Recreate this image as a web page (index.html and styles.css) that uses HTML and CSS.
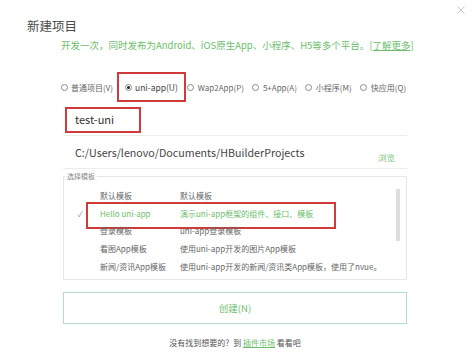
FILE: index.html
```html
<!DOCTYPE html>
<html lang="zh">
<head>
<meta charset="utf-8">
<title>新建项目</title>
<link rel="stylesheet" href="styles.css">
</head>
<body>
<div class="dialog">
  <span class="close">
    <svg width="8" height="8" viewBox="0 0 8 8"><path d="M0.5 0.5L7.5 7.5M7.5 0.5L0.5 7.5" stroke="#c8c8c8" stroke-width="1"/></svg>
  </span>
  <h1 class="title">新建项目</h1>
  <p class="subtitle">开发一次，同时发布为Android、iOS原生App、小程序、H5等多个平台。<a class="more">[了解更多]</a></p>

  <div class="content">
    <div class="types">
      <label class="type"><span class="radio"></span>普通项目(V)</label>
      <label class="type selected"><span class="radio checked"></span>uni-app(U)</label>
      <label class="type"><span class="radio"></span>Wap2App(P)</label>
      <label class="type"><span class="radio"></span>5+App(A)</label>
      <label class="type"><span class="radio"></span>小程序(M)</label>
      <label class="type"><span class="radio"></span>快应用(Q)</label>
    </div>

    <div class="name-row">
      <div class="name-box">test-uni</div>
    </div>

    <div class="path-row">
      <span class="path">C:/Users/lenovo/Documents/HBuilderProjects</span>
      <a class="browse">浏览</a>
    </div>

    <fieldset class="templates">
      <legend>选择模板</legend>
      <div class="tpl-body">
        <div class="tpl-list">
          <div class="tpl"><span class="chk"></span><span class="c1">默认模板</span><span>默认模板</span></div>
          <div class="tpl active"><span class="chk">✓</span><span class="c1">Hello uni-app</span><span>演示uni-app框架的组件、接口、模板</span></div>
          <div class="tpl"><span class="chk"></span><span class="c1">登录模板</span><span>uni-app登录模板</span></div>
          <div class="tpl"><span class="chk"></span><span class="c1">看图App模板</span><span>使用uni-app开发的图片App模板</span></div>
          <div class="tpl"><span class="chk"></span><span class="c1">新闻/资讯App模板</span><span>使用uni-app开发的新闻/资讯类App模板，使用了nvue。</span></div>
        </div>
        <div class="scroll"><div class="thumb"></div></div>
      </div>
    </fieldset>

    <button class="create">创建(N)</button>

    <p class="footer">没有找到想要的？到 <a class="market">插件市场</a> 看看吧</p>
  </div>
</div>
</body>
</html>
```

FILE: styles.css
```css
* { box-sizing: border-box; }
html, body {
  margin: 0;
  padding: 0;
  background: #fff;
}
body {
  font-family: "Noto Sans CJK SC", "Noto Sans", sans-serif;
  color: #555;
}
.dialog {
  position: relative;
  width: 474px;
  height: 363px;
  padding-top: 18px;
}
.close {
  position: absolute;
  top: 6px;
  left: 457px;
  width: 8px;
  height: 8px;
  display: block;
}
.close svg { display: block; }
.title {
  margin: 0 0 0 27px;
  font-size: 12.5px;
  line-height: 16px;
  font-weight: normal;
  color: #4a4a4a;
}
.subtitle {
  margin: 4px 0 0 61px;
  font-size: 9.5px;
  line-height: 14px;
  color: #6cbd6c;
  white-space: nowrap;
}
.more {
  text-decoration: underline;
  color: #6cbd6c;
}
.content {
  margin: 20px 0 0 63px;
  width: 344px;
}
.types {
  display: flex;
  align-items: center;
  height: 30px;
  font-size: 8px;
  color: #666;
  white-space: nowrap;
}
.type {
  display: flex;
  align-items: center;
  gap: 4px;
  margin-right: 8px;
}
.type:first-child { margin-left: -2px; margin-right: 4px; gap: 3px; }
.type.selected {
  height: 30px;
  border: 2px solid #cf3a3a;
  padding: 0 6px 0 6px;
  margin-right: 1px;
  gap: 3px;
  font-size: 8.5px;
  color: #444;
}
.radio {
  width: 7px;
  height: 7px;
  border: 1px solid #8a8a8a;
  border-radius: 50%;
  display: inline-flex;
  align-items: center;
  justify-content: center;
  flex: none;
}
.radio.checked::after {
  content: "";
  width: 3px;
  height: 3px;
  background: #222;
  border-radius: 50%;
}
.name-row {
  height: 34px;
  padding: 5px 0 0 2px;
  border-bottom: 1px solid #ececec;
}
.name-box {
  width: 76px;
  height: 26px;
  border: 2px solid #cf3a3a;
  padding-left: 8px;
  font-size: 11px;
  line-height: 21px;
  color: #333;
}
.path-row {
  height: 33px;
  display: flex;
  align-items: flex-start;
  justify-content: space-between;
  padding: 9px 12px 0 12px;
  border-bottom: 1px solid #ececec;
}
.path {
  font-size: 10.7px;
  line-height: 16px;
  color: #444;
}
.browse {
  margin-top: 6px;
  font-size: 8.5px;
  line-height: 12px;
  color: #7cc47c;
}
.templates {
  margin: 2px 0 0 0;
  padding: 0 0 4px 0;
  border: 1px solid #e6e6e6;
  min-width: 0;
}
.templates legend {
  margin-left: 1px;
  padding: 0 2px;
  font-size: 7px;
  line-height: 10px;
  color: #888;
}
.tpl-body {
  display: flex;
  padding-top: 6px;
}
.tpl-list {
  flex: 1;
}
.tpl {
  position: relative;
  display: grid;
  grid-template-columns: 36px 80px 1fr;
  height: 17.6px;
  align-items: center;
  font-size: 8px;
  color: #666;
  white-space: nowrap;
}
.chk {
  text-align: right;
  padding-right: 17px;
  color: #999;
  font-size: 8px;
}
.tpl.active { color: #6cbd6c; }
.tpl.active::after {
  content: "";
  position: absolute;
  left: 22px;
  top: -3px;
  width: 246px;
  height: 23px;
  border: 2px solid #cf3a3a;
}
.scroll {
  width: 4px;
  margin: 2px 6px 0 0;
}
.thumb {
  width: 4px;
  height: 52px;
  background: #dedede;
}
.create {
  display: block;
  width: 344px;
  height: 32px;
  margin-top: 12px;
  border: 1px solid #b6ddc9;
  background: #fff;
  color: #6cbd6c;
  font-family: inherit;
  font-size: 9.5px;
  padding: 0;
}
.footer {
  margin: 13px 0 0 0;
  text-align: center;
  font-size: 8px;
  line-height: 12px;
  color: #555;
}
.market {
  color: #6cbd6c;
  text-decoration: underline;
}
```
